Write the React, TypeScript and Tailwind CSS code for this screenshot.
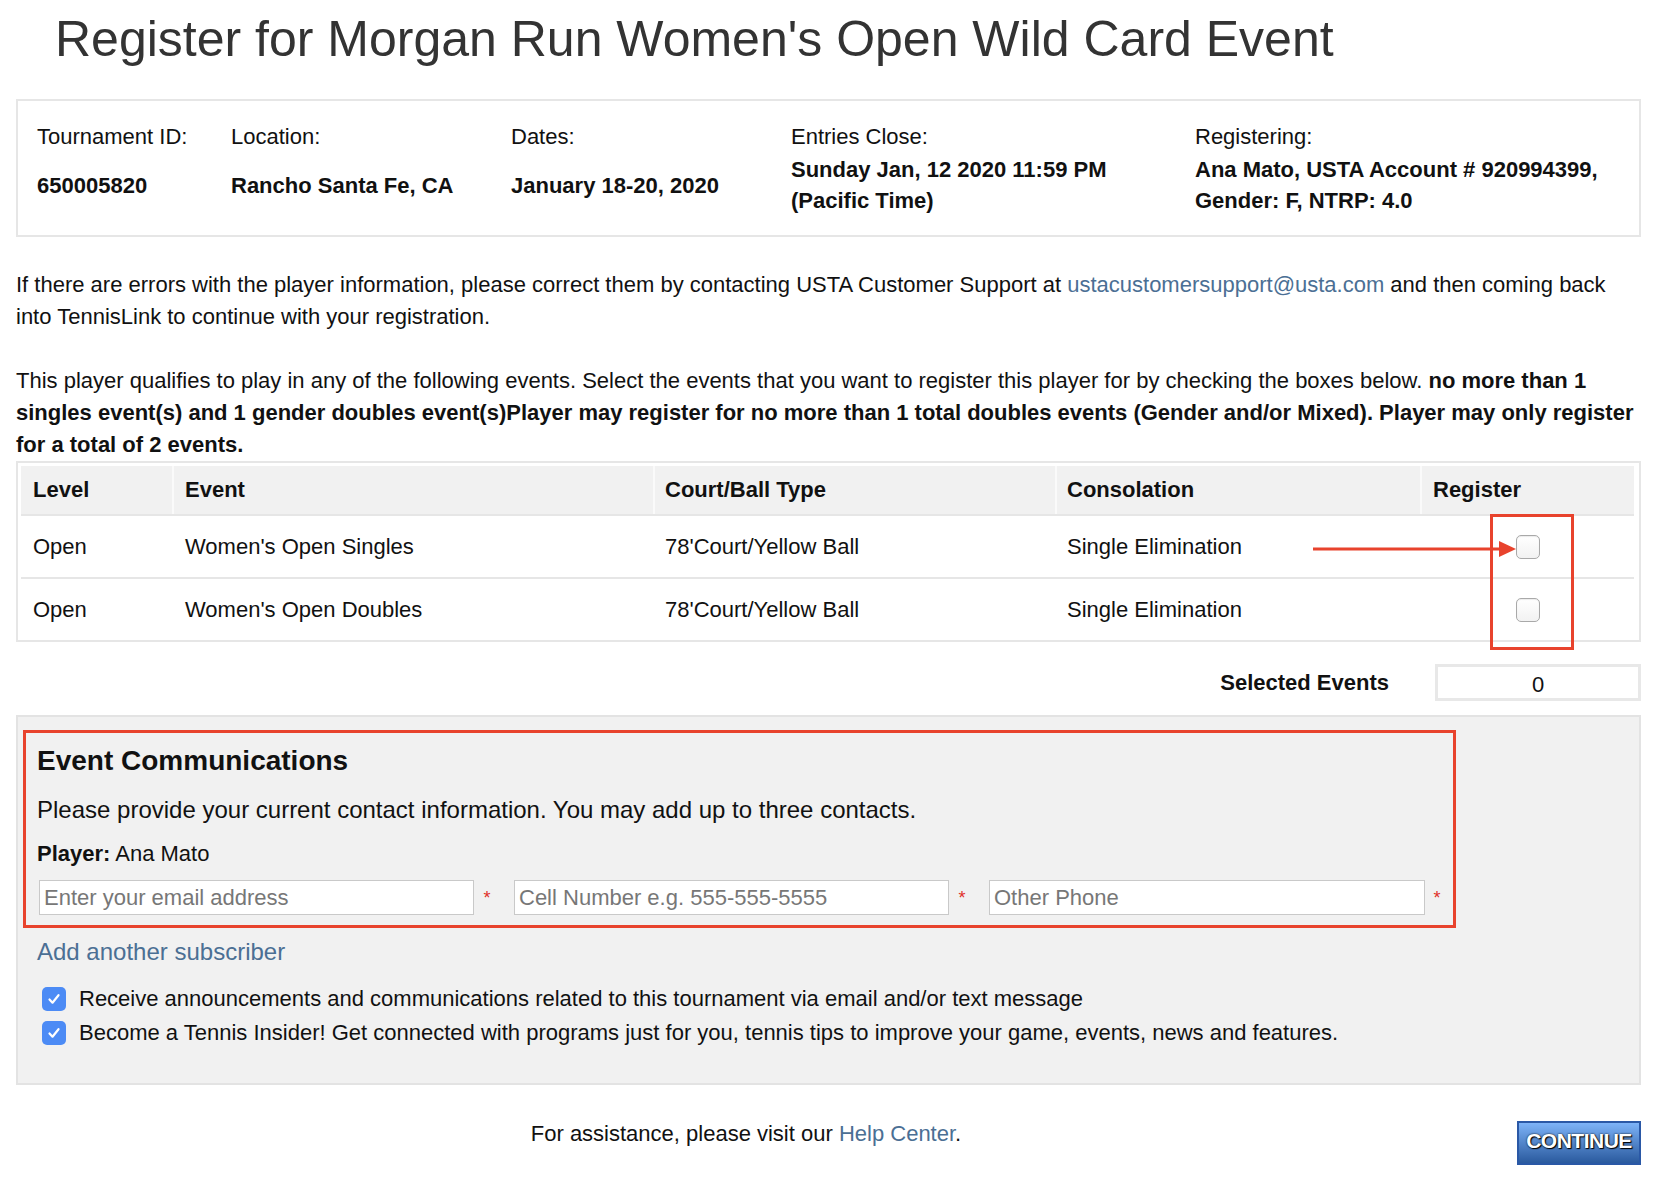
const linkColor = "text-[#4b6f94]";

function BoxCheck() {
  return (
    <span className="block h-[24px] w-[24px] rounded-[5px] border border-[#a9a9a9] bg-linear-to-b from-white to-[#f2f2f2] shadow-[inset_0_1px_1px_rgba(0,0,0,0.08)]" />
  );
}

function BlueCheck() {
  return (
    <span className="flex h-[24px] w-[24px] items-center justify-center rounded-[5px] bg-[#4c8bf5]">
      <svg width="16" height="16" viewBox="0 0 16 16" fill="none">
        <path d="M3.5 8.5l3 3.2 6-7.5" stroke="white" strokeWidth="2.2" strokeLinecap="round" strokeLinejoin="round" />
      </svg>
    </span>
  );
}

function ContactInput({ placeholder }: { placeholder: string }) {
  return (
    <div className="flex w-[475px] items-center">
      <input
        placeholder={placeholder}
        className="h-[35px] w-[435px] border border-[#c9c9c9] bg-white pl-[4px] text-[22px] text-[#111] outline-none placeholder:text-[#777]"
      />
      <span className="ml-[9px] w-[8px] text-center text-[18px] leading-none text-[#e0302a]">*</span>
    </div>
  );
}

const events = [
  { level: "Open", name: "Women's Open Singles", court: "78'Court/Yellow Ball", cons: "Single Elimination" },
  { level: "Open", name: "Women's Open Doubles", court: "78'Court/Yellow Ball", cons: "Single Elimination" },
];

export default function App() {
  return (
    <div className="min-h-screen bg-white font-['Liberation_Sans',Arial,sans-serif] text-[22px] leading-[32px] text-[#111]">
      <h1 className="ml-[55px] pt-[11px] text-[50px] leading-[56px] font-normal text-[#333]">
        Register for Morgan Run Women's Open Wild Card Event
      </h1>

      <div className="ml-[16px] mr-[13px]">
        {/* Tournament info */}
        <div className="mt-[32px] grid grid-cols-[194px_280px_280px_404px_1fr] gap-y-[2px] border-2 border-[#e6e6e6] pt-[20px] pb-[19px] pl-[19px] leading-[31px]">
          <div>Tournament ID:</div>
          <div>Location:</div>
          <div>Dates:</div>
          <div>Entries Close:</div>
          <div>Registering:</div>
          <div className="self-center font-bold">650005820</div>
          <div className="self-center font-bold">Rancho Santa Fe, CA</div>
          <div className="self-center font-bold">January 18-20, 2020</div>
          <div className="self-center font-bold whitespace-nowrap">
            Sunday Jan, 12 2020 11:59 PM
            <br />
            (Pacific Time)
          </div>
          <div className="self-center font-bold whitespace-nowrap">
            Ana Mato, USTA Account # 920994399,
            <br />
            Gender: F, NTRP: 4.0
          </div>
        </div>

        <p className="mt-[32px] whitespace-nowrap">
          If there are errors with the player information, please correct them by contacting USTA Customer Support at{" "}
          <a className={linkColor}>ustacustomersupport@usta.com</a> and then coming back
          <br />
          into TennisLink to continue with your registration.
        </p>

        <p className="mt-[32px] whitespace-nowrap">
          This player qualifies to play in any of the following events. Select the events that you want to register this player for by checking the boxes below.{" "}
          <b>no more than 1</b>
          <br />
          <b>
            singles event(s) and 1 gender doubles event(s)Player may register for no more than 1 total doubles events (Gender and/or Mixed). Player may only register
          </b>
          <br />
          <b>for a total of 2 events.</b>
        </p>

        {/* Events table */}
        <div className="relative border-2 border-[#e6e6e6] pt-[3px] pl-[3px] pr-[5px]">
          <div className="grid h-[48px] grid-cols-[151px_481px_402px_365px_214px] items-stretch bg-[#f1f1f1] font-bold">
            <div className="flex items-center pl-[12px]">Level</div>
            <div className="flex items-center border-l-2 border-[#fafafa] pl-[11px]">Event</div>
            <div className="flex items-center border-l-2 border-[#fafafa] pl-[10px]">Court/Ball Type</div>
            <div className="flex items-center border-l-2 border-[#fafafa] pl-[10px]">Consolation</div>
            <div className="flex items-center border-l-2 border-[#fafafa] pl-[11px]">Register</div>
          </div>
          {events.map((ev) => (
            <div
              key={ev.name}
              className="grid h-[63px] grid-cols-[151px_481px_402px_365px_214px] items-center border-t-2 border-[#e6e6e6]"
            >
              <div className="pl-[12px]">{ev.level}</div>
              <div className="pl-[13px]">{ev.name}</div>
              <div className="pl-[12px]">{ev.court}</div>
              <div className="pl-[12px]">{ev.cons}</div>
              <div className="pl-[96px]">
                <BoxCheck />
              </div>
            </div>
          ))}

          {/* annotation */}
          <div className="absolute left-[1472px] top-[51px] h-[136px] w-[84px] border-[3px] border-[#e8432d]" />
          <svg className="absolute left-[1295px] top-[77px]" width="204" height="18" viewBox="0 0 204 18">
            <line x1="0" y1="9" x2="188" y2="9" stroke="#e8432d" strokeWidth="3" />
            <polygon points="186,1 203,9 186,17" fill="#e8432d" />
          </svg>
        </div>

        {/* Selected events */}
        <div className="mt-[22px] flex items-center justify-end">
          <span className="mr-[46px] font-bold">Selected Events</span>
          <div className="flex h-[37px] w-[206px] items-center justify-center border-[3px] border-[#e8e8e8] bg-white pt-[4px]">
            0
          </div>
        </div>

        {/* Communications */}
        <div className="mt-[14px] border-2 border-[#e3e3e3] bg-[#f1f1f1] pt-[13px] pl-[5px] pb-[33px]">
          <div className="w-[1433px] border-[3px] border-[#e8432d] pt-[10px] pb-[10px] pl-[11px]">
            <h3 className="text-[28px] leading-[36px] font-bold">Event Communications</h3>
            <p className="mt-[15px] text-[24px] leading-[32px]">
              Please provide your current contact information. You may add up to three contacts.
            </p>
            <p className="mt-[13px] leading-[30px]">
              <b>Player:</b> Ana Mato
            </p>
            <div className="mt-[11px] flex pl-[2px]">
              <ContactInput placeholder="Enter your email address" />
              <ContactInput placeholder="Cell Number e.g. 555-555-5555" />
              <div className="flex items-center">
                <input
                  placeholder="Other Phone"
                  className="h-[35px] w-[436px] border border-[#c9c9c9] bg-white pl-[4px] text-[22px] text-[#111] outline-none placeholder:text-[#777]"
                />
                <span className="w-[24px] text-center text-[18px] leading-none text-[#e0302a]">*</span>
              </div>
            </div>
          </div>

          <a className={`mt-[8px] ml-[14px] block text-[24px] leading-[32px] ${linkColor}`}>Add another subscriber</a>

          <div className="mt-[14px] ml-[19px]">
            <label className="flex h-[34px] items-center">
              <span className="mr-[13px]">
                <BlueCheck />
              </span>
              Receive announcements and communications related to this tournament via email and/or text message
            </label>
            <label className="flex h-[34px] items-center">
              <span className="mr-[13px]">
                <BlueCheck />
              </span>
              Become a Tennis Insider! Get connected with programs just for you, tennis tips to improve your game, events, news and features.
            </label>
          </div>
        </div>

        {/* Footer */}
        <div className="mt-[33px] flex items-start">
          <div className="w-[1460px] text-center">
            For assistance, please visit our <a className={linkColor}>Help Center</a>.
          </div>
          <button className="mt-[3px] ml-[41px] h-[44px] w-[124px] border-2 border-[#2a58a6] bg-linear-to-b from-[#7db3f8] to-[#2a5a9e] pb-[4px] text-[21px] font-bold tracking-[-0.5px] text-white [text-shadow:1px_1px_1px_#000,0_0_2px_#000]">
            CONTINUE
          </button>
        </div>
      </div>
    </div>
  );
}
